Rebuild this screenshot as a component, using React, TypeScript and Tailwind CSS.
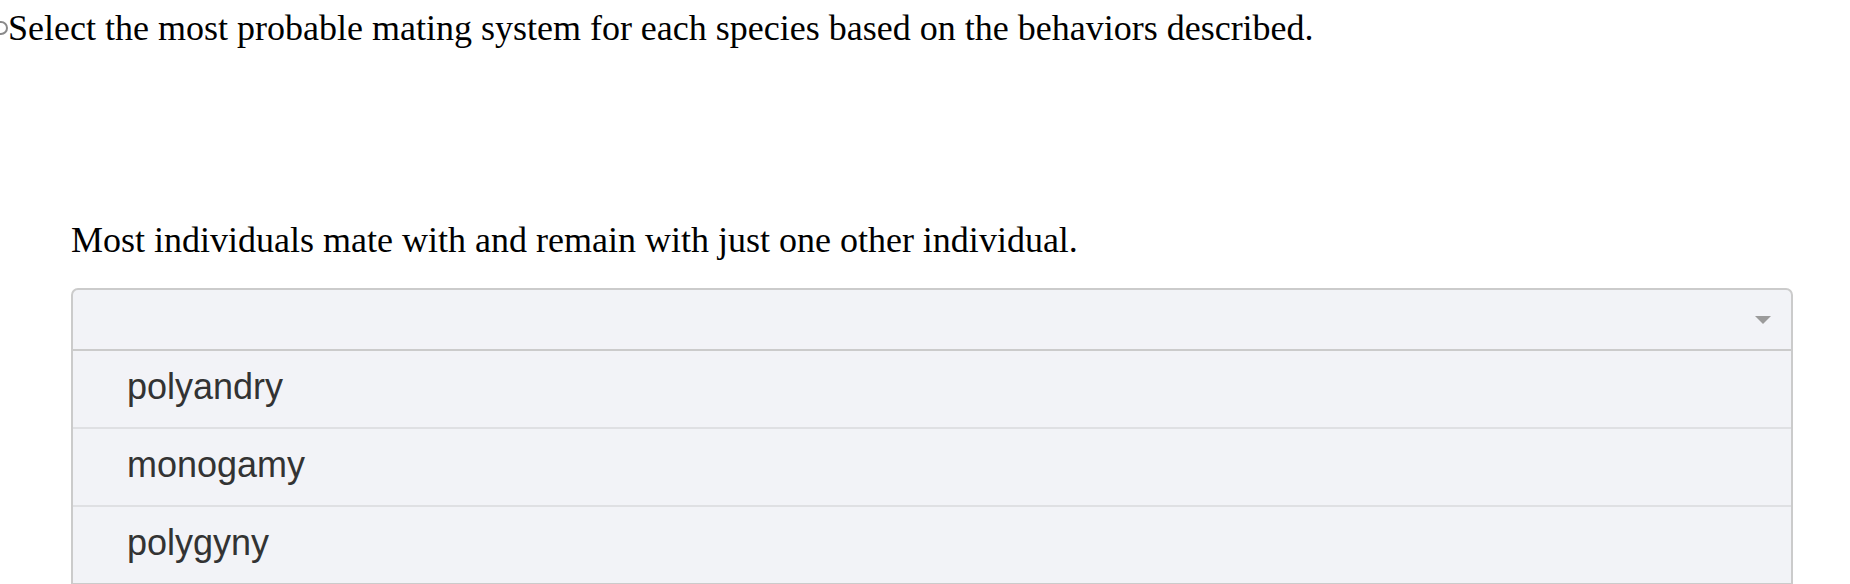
import { useState } from 'react';

const OPTIONS = ['polyandry', 'monogamy', 'polygyny'];

export default function App() {
  const [value, setValue] = useState('');

  return (
    <div className="min-h-[584px] bg-white overflow-hidden">
      {/* Prompt */}
      <div className="flex items-center h-[56px]" style={{ fontFamily: '"Liberation Serif", "Times New Roman", serif' }}>
        <span className="inline-block w-[14px] h-[14px] rounded-full border-2 border-[#8a8a8a] -ml-[6px] shrink-0" />
        <p className="text-[36px] leading-none text-black">
          Select the most probable mating system for each species based on the behaviors described.
        </p>
      </div>

      {/* Question */}
      <div className="pl-[71px] pr-[57px] pt-[166px]">
        <p
          className="text-[36px] leading-none text-black"
          style={{ fontFamily: '"Liberation Serif", "Times New Roman", serif' }}
        >
          Most individuals mate with and remain with just one other individual.
        </p>

        <div className="mt-[30px] border-2 border-[#cbcbcb] rounded-t-[7px] bg-[#f2f3f7]" style={{ fontFamily: '"Liberation Sans", Arial, sans-serif' }}>
          <div className="h-[61px] flex items-center justify-end pr-[20px] border-b-2 border-[#cbcbcb]">
            <span className="text-[36px] text-[#333]">{value}</span>
            <svg width="16" height="8" viewBox="0 0 16 8" className="ml-auto">
              <path d="M0 0 L16 0 L8 8 Z" fill="#9b9b9b" />
            </svg>
          </div>
          {OPTIONS.map((o, i) => (
            <div
              key={o}
              onClick={() => setValue(o)}
              className={`flex items-center pl-[54px] pb-[4px] text-[36px] text-[#333] cursor-pointer ${i > 0 ? 'h-[78px] border-t-2 border-[#dfe0e3]' : 'h-[76px]'}`}
            >
              {o}
            </div>
          ))}
        </div>
      </div>
    </div>
  );
}
